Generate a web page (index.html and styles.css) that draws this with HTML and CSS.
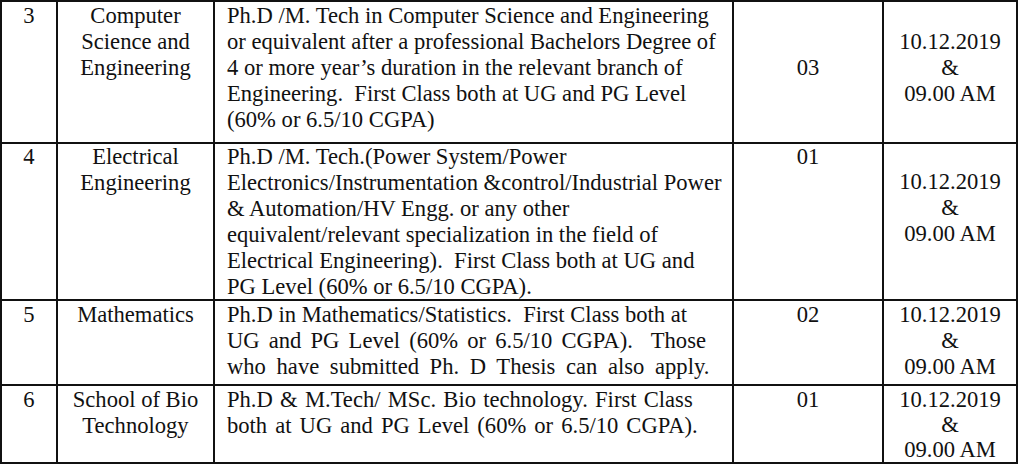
FILE: index.html
```html
<!DOCTYPE html>
<html>
<head>
<meta charset="utf-8">
<link rel="stylesheet" href="styles.css">
</head>
<body>
<div class="sheet">
  <div class="cell no">3</div>
  <div class="cell dept">Computer<br>Science and<br>Engineering</div>
  <div class="cell qual">Ph.D /M. Tech in Computer Science and Engineering<br>or equivalent after a professional Bachelors Degree of<br>4 or more year’s duration in the relevant branch of<br>Engineering.&nbsp; First Class both at UG and PG Level<br>(60% or 6.5/10 CGPA)</div>
  <div class="cell pos skip2">03</div>
  <div class="cell date skip1">10.12.2019<br>&amp;<br>09.00 AM</div>

  <div class="cell no r4">4</div>
  <div class="cell dept r4">Electrical<br>Engineering</div>
  <div class="cell qual r4">Ph.D /M. Tech.(Power System/Power<br>Electronics/Instrumentation &amp;control/Industrial Power<br>&amp; Automation/HV Engg. or any other<br>equivalent/relevant specialization in the field of<br>Electrical Engineering).&nbsp; First Class both at UG and<br>PG Level (60% or 6.5/10 CGPA).</div>
  <div class="cell pos r4">01</div>
  <div class="cell date r4 r4-skip">10.12.2019<br>&amp;<br>09.00 AM</div>

  <div class="cell no">5</div>
  <div class="cell dept">Mathematics</div>
  <div class="cell qual"><span class="ws-1">Ph.D in Mathematics/Statistics.&nbsp; First Class both at</span><br><span class="ws-2">UG and PG Level (60% or 6.5/10 CGPA).&nbsp; Those</span><br><span class="ws-3">who have submitted Ph. D Thesis can also apply.</span></div>
  <div class="cell pos">02</div>
  <div class="cell date">10.12.2019<br>&amp;<br>09.00 AM</div>

  <div class="cell no">6</div>
  <div class="cell dept">School of Bio<br>Technology</div>
  <div class="cell qual"><span class="ws-b">Ph.D &amp; M.Tech/ MSc. Bio technology. First Class</span><br><span class="ws-c">both at UG and PG Level (60% or 6.5/10 CGPA).</span></div>
  <div class="cell pos">01</div>
  <div class="cell date tight">10.12.2019<br>&amp;<br>09.00 AM</div>
</div>
</body>
</html>
```

FILE: styles.css
```css
body {
  margin: 0;
  background: #ffffff;
  color: #111111;
}

.sheet {
  display: grid;
  width: 1014px;
  grid-template-columns: 54px 155px 517px 148px 132px;
  grid-template-rows: 140px 155px 83px 76px;
  gap: 2px;
  padding: 2px;
  background: #111111;
}

.cell {
  background: #ffffff;
  font-family: "Liberation Serif", "Times New Roman", serif;
  font-size: 22.6px;
  line-height: 26px;
  padding-top: 1px;
  text-align: center;
  white-space: nowrap;
}

.qual {
  text-align: left;
  padding-left: 12px;
}

.skip1 { padding-top: 27px; }
.skip2 { padding-top: 53px; }

.r4 { padding-top: 0; }
.r4-skip { padding-top: 25px; }

.tight {
  line-height: 25px;
  padding-top: 1px;
}

.ws-1 { word-spacing: 0; }
.ws-2 { word-spacing: 3.5px; }
.ws-3 { word-spacing: 5px; }
.ws-b { word-spacing: 1.6px; }
.ws-c { word-spacing: 2.4px; }
```
